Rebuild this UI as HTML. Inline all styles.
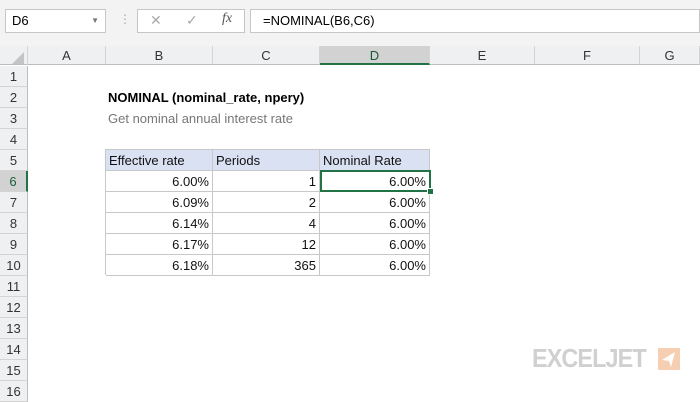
<!DOCTYPE html><html><head><style>
body{margin:0;width:700px;height:400px;overflow:hidden;background:#fff;font-family:"Liberation Sans",sans-serif;position:relative}
.a{position:absolute}
.ch{position:absolute;top:46px;height:19px;background:#eef0f2;border-right:1px solid #d4d4d4;border-bottom:1px solid #bdbdbd;text-align:center;font-size:13px;line-height:19px;color:#333;box-sizing:border-box}
.rh{position:absolute;left:0;width:28px;height:21px;background:#eef0f2;border-bottom:1px solid #d4d4d4;border-right:1px solid #bdbdbd;text-align:center;font-size:13px;line-height:21px;color:#333;box-sizing:border-box}
.c{position:absolute;height:21px;box-sizing:border-box;border-right:1px solid #c8c8c8;border-bottom:1px solid #c8c8c8;font-size:13px;line-height:21px;padding:0 3px;color:#111}
.r{text-align:right}
.h{background:#dae1f2}
</style></head><body>
<div class="a" style="left:0;top:0;width:700px;height:46px;background:#f3f3f3"></div>
<div class="a" style="left:5px;top:9px;width:101px;height:24px;background:#fff;border:1px solid #c6c6c6;box-sizing:border-box;font-size:13px;line-height:22px;padding-left:6px">D6<span style="position:absolute;right:6px;top:0;font-size:8px;color:#777">▼</span></div>
<div class="a" style="left:119px;top:12px;color:#aaa;font-size:12px">⋮</div>
<div class="a" style="left:137px;top:9px;width:108px;height:24px;background:#fff;border:1px solid #c6c6c6;box-sizing:border-box"></div>
<div class="a" style="left:150px;top:12px;color:#aaa;font-size:14px">✕</div>
<div class="a" style="left:186px;top:12px;color:#aaa;font-size:14px">✓</div>
<div class="a" style="left:222px;top:11px;color:#555;font-size:14px;font-style:italic;font-family:'Liberation Serif',serif">fx</div>
<div class="a" style="left:250px;top:9px;width:450px;height:24px;background:#fff;border:1px solid #c6c6c6;box-sizing:border-box;font-size:13px;line-height:22px;padding-left:12px">=NOMINAL(B6,C6)</div>
<div class="ch" style="left:0;width:28px"></div>
<div class="a" style="left:12px;top:52px;width:0;height:0;border-left:12px solid transparent;border-bottom:12px solid #c4c4c4"></div>
<div class="ch" style="left:28px;width:78px">A</div>
<div class="ch" style="left:106px;width:107px">B</div>
<div class="ch" style="left:213px;width:107px">C</div>
<div class="ch" style="left:320px;width:110px;background:#d2d2d2;border-bottom:2px solid #217346;color:#185c37">D</div>
<div class="ch" style="left:430px;width:105px">E</div>
<div class="ch" style="left:535px;width:105px">F</div>
<div class="ch" style="left:640px;width:60px">G</div>
<div class="rh" style="top:66px">1</div><div class="rh" style="top:87px">2</div><div class="rh" style="top:108px">3</div><div class="rh" style="top:129px">4</div><div class="rh" style="top:150px">5</div>
<div class="rh" style="top:171px;background:#d2d2d2;border-right:2px solid #217346;color:#185c37">6</div>
<div class="rh" style="top:192px">7</div><div class="rh" style="top:213px">8</div><div class="rh" style="top:234px">9</div><div class="rh" style="top:255px">10</div><div class="rh" style="top:276px">11</div><div class="rh" style="top:297px">12</div><div class="rh" style="top:318px">13</div><div class="rh" style="top:339px">14</div><div class="rh" style="top:360px">15</div><div class="rh" style="top:381px">16</div>
<div class="a" style="left:108px;top:90px;font-size:13px;font-weight:bold">NOMINAL (nominal_rate, npery)</div>
<div class="a" style="left:108px;top:111px;font-size:13px;color:#777">Get nominal annual interest rate</div>
<div class="a" style="left:105px;top:149px;width:1px;height:126px;background:#c8c8c8"></div>
<div class="a" style="left:105px;top:149px;width:325px;height:1px;background:#c8c8c8"></div>
<div class="c h" style="left:106px;top:150px;width:107px">Effective rate</div>
<div class="c h" style="left:213px;top:150px;width:107px">Periods</div>
<div class="c h" style="left:320px;top:150px;width:110px">Nominal Rate</div>
<div class="c r" style="left:106px;top:171px;width:107px">6.00%</div><div class="c r" style="left:213px;top:171px;width:107px">1</div><div class="c r" style="left:320px;top:171px;width:110px">6.00%</div>
<div class="c r" style="left:106px;top:192px;width:107px">6.09%</div><div class="c r" style="left:213px;top:192px;width:107px">2</div><div class="c r" style="left:320px;top:192px;width:110px">6.00%</div>
<div class="c r" style="left:106px;top:213px;width:107px">6.14%</div><div class="c r" style="left:213px;top:213px;width:107px">4</div><div class="c r" style="left:320px;top:213px;width:110px">6.00%</div>
<div class="c r" style="left:106px;top:234px;width:107px">6.17%</div><div class="c r" style="left:213px;top:234px;width:107px">12</div><div class="c r" style="left:320px;top:234px;width:110px">6.00%</div>
<div class="c r" style="left:106px;top:255px;width:107px">6.18%</div><div class="c r" style="left:213px;top:255px;width:107px">365</div><div class="c r" style="left:320px;top:255px;width:110px">6.00%</div>
<div class="a" style="left:320px;top:170px;width:111px;height:22px;border:2px solid #217346;box-sizing:border-box"></div>
<div class="a" style="left:427px;top:188px;width:5px;height:5px;background:#217346;border:1px solid #fff"></div>
<div class="a" style="left:532px;top:343px;font-size:26px;font-weight:bold;color:#d0d0d0;letter-spacing:-1px;transform:scaleX(0.9);transform-origin:left">EXCELJET</div>
<svg class="a" style="left:658px;top:348px" width="22" height="22" viewBox="0 0 22 22"><rect width="22" height="22" fill="#f6cfb2"/><polygon points="4,12 17,4 13,19 11,13" fill="#fff"/></svg>
</body></html>
